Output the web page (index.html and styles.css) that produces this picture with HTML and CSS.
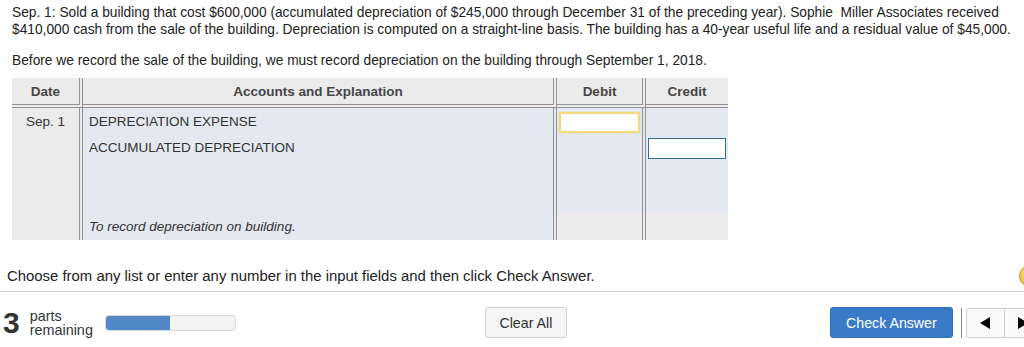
FILE: index.html
```html
<!DOCTYPE html>
<html lang="en">
<head>
<meta charset="utf-8">
<title>Journal entry</title>
<link rel="stylesheet" href="styles.css">
</head>
<body>
<div class="page">
  <div class="problem">
    <p class="intro">Sep. 1: Sold a building that cost $600,000 (accumulated depreciation of $245,000 through December 31 of the preceding year). Sophie&nbsp; Miller Associates received $410,000 cash from the sale of the building. Depreciation is computed on a straight-line basis. The building has a 40-year useful life and a residual value of $45,000.</p>
    <p class="lead">Before we record the sale of the building, we must record depreciation on the building through September 1, 2018.</p>
    <div class="journal">
      <div class="th c-date">Date</div>
      <div class="th c-acct">Accounts and Explanation</div>
      <div class="th c-debit">Debit</div>
      <div class="th c-credit">Credit</div>

      <div class="td c-date date-cell">Sep. 1</div>
      <div class="td c-acct">DEPRECIATION EXPENSE</div>
      <div class="td c-debit"><input class="amt amt-active" type="text"></div>
      <div class="td c-credit"></div>

      <div class="td c-acct">ACCUMULATED DEPRECIATION</div>
      <div class="td c-debit"></div>
      <div class="td c-credit"><input class="amt amt-focus" type="text"></div>

      <div class="td c-acct"></div>
      <div class="td c-debit"></div>
      <div class="td c-credit"></div>

      <div class="td c-acct"></div>
      <div class="td c-debit"></div>
      <div class="td c-credit"></div>

      <div class="td c-acct memo">To record depreciation on building.</div>
      <div class="td c-debit closed"></div>
      <div class="td c-credit closed"></div>
    </div>
  </div>

  <div class="instructions">
    <span>Choose from any list or enter any number in the input fields and then click Check Answer.</span>
    <span class="hint"></span>
  </div>

  <div class="footer">
    <span class="parts-count">3</span>
    <span class="parts-label">parts<br>remaining</span>
    <span class="progress"><span class="progress-fill" style="width:50%"></span></span>
    <button class="btn btn-clear" type="button">Clear All</button>
    <button class="btn btn-check" type="button">Check Answer</button>
    <span class="divider"></span>
    <span class="nav">
      <button class="nav-btn" type="button"><svg width="10" height="12" viewBox="0 0 10 12"><polygon points="10,0 10,12 0,6" fill="#000"/></svg></button>
      <button class="nav-btn" type="button"><svg width="10" height="12" viewBox="0 0 10 12"><polygon points="0,0 0,12 10,6" fill="#000"/></svg></button>
    </span>
  </div>
</div>
</body>
</html>
```

FILE: styles.css
```css
html, body {
  margin: 0;
  padding: 0;
  background: #fff;
}

body {
  width: 1024px;
  height: 347px;
  overflow: hidden;
  font-family: "Liberation Sans", Arial, sans-serif;
  color: #222;
}

.page {
  width: 1024px;
}

.problem {
  padding: 4px 10px 0 12px;
}

.intro,
.lead {
  margin: 0;
  font-size: 13.75px;
  line-height: 17px;
}

.lead {
  margin-top: 14px;
}

.journal {
  margin-top: 9px;
  display: grid;
  width: 716px;
  grid-template-columns: 71px 474px 89px 82px;
  grid-template-rows: 30px 26px 26px 26px 27px 27px;
  font-size: 13.5px;
  color: #333;
}

.th,
.td {
  box-sizing: border-box;
}

.th {
  background: #ebebeb;
  color: #464646;
  font-weight: bold;
  text-align: center;
  padding-top: 2px;
  line-height: 24px;
  border-bottom: 4px double #939393;
}

.c-date,
.c-acct,
.c-debit {
  border-right: 4px double #939393;
}

.td {
  background: #e4e8f0;
}

.date-cell {
  grid-row: 2 / span 5;
  background: #ebebeb;
  text-align: center;
  padding-top: 6px;
  line-height: 16px;
}

.td.c-acct {
  padding: 6px 6px 4px;
  line-height: 16px;
}

.memo {
  font-style: italic;
}

.td.closed {
  background: #ebebeb;
}

.td.c-debit,
.td.c-credit {
  padding: 4px 2px 0;
}

.amt {
  display: block;
  box-sizing: border-box;
  margin: 0;
  padding: 0 4px;
  background: #fff;
  font: 13px "Liberation Sans", Arial, sans-serif;
  outline: none;
}

.amt-active {
  width: 81px;
  height: 21px;
  border: 2px solid #f4da7c;
  box-shadow: 0 0 1px #f0cf60;
}

.amt-focus {
  width: 78px;
  height: 21px;
  border: 1px solid #2f7090;
}

.instructions {
  margin-top: 27px;
  padding: 0 0 6px 7px;
  border-bottom: 1px solid #c7ceda;
  display: flex;
  justify-content: space-between;
  align-items: center;
  font-size: 14.9px;
  line-height: 18px;
  color: #222;
}

.hint {
  flex-shrink: 0;
  width: 20px;
  height: 20px;
  border-radius: 50%;
  margin: -1px -15px -1px 0;
  background: radial-gradient(circle at 45% 40%, #fbdc7e 0%, #f2c04f 60%, #d49b35 100%);
  box-shadow: inset 0 0 0 1px #d39a3a;
}

.footer {
  display: flex;
  align-items: center;
  padding: 15px 0 0 3px;
  white-space: nowrap;
}

.footer > * {
  flex-shrink: 0;
}

.parts-count {
  font-size: 30px;
  font-weight: bold;
  line-height: 30px;
  color: #333;
}

.parts-label {
  margin-left: 10px;
  font-size: 14.4px;
  line-height: 14px;
  color: #333;
}

.progress {
  margin-left: 12px;
  width: 131px;
  height: 16px;
  box-sizing: border-box;
  border: 1px solid #d9d9d9;
  border-radius: 4px;
  background: #f3f3f3;
  overflow: hidden;
  display: flex;
}

.progress-fill {
  display: block;
  height: 100%;
  background: #4f88c5;
}

.btn {
  box-sizing: border-box;
  height: 31px;
  margin: 0;
  padding: 0;
  border-radius: 3px;
  font: 14.2px "Liberation Sans", Arial, sans-serif;
  cursor: pointer;
}

.btn-clear {
  margin-left: 249px;
  width: 82px;
  background: #f5f5f5;
  border: 1px solid #cfcfcf;
  color: #333;
}

.btn-check {
  margin-left: 263px;
  width: 123px;
  background: #3a7bc8;
  border: 1px solid #3370bb;
  color: #fff;
}

.divider {
  margin-left: 8px;
  width: 1px;
  height: 30px;
  background: #8a8a8a;
}

.nav {
  margin-left: 4px;
  display: flex;
  height: 30px;
  box-sizing: border-box;
  border: 1px solid #cfcfcf;
  border-radius: 3px;
  background: #fafafa;
}

.nav-btn {
  width: 37px;
  height: 28px;
  margin: 0;
  padding: 0;
  border: none;
  background: transparent;
  display: flex;
  align-items: center;
  justify-content: center;
}

.nav-btn + .nav-btn {
  border-left: 1px solid #cfcfcf;
}
```
